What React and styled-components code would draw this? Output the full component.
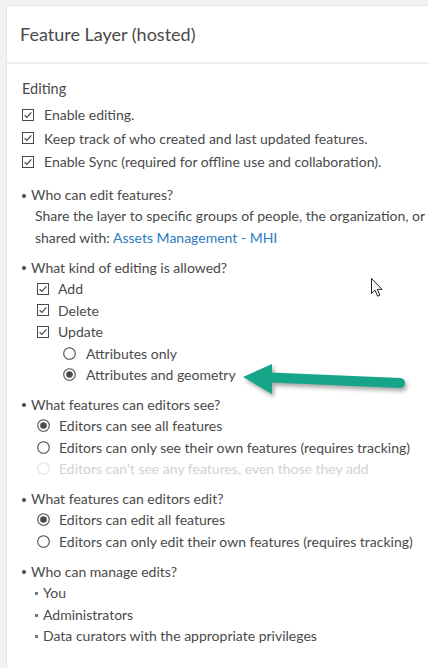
import React from 'react';
import styled, { createGlobalStyle } from 'styled-components';

const GlobalStyle = createGlobalStyle`
  html, body {margin: 0; padding: 0; background: #f2f2f2;}
  body {font-family: Lato, "Open Sans", sans-serif; color: #4a4a4a;}
  ul {list-style: none; margin: 0; padding: 0;}
`;

const Page = styled.div`
  position: relative;
  height: 668px;
  overflow: hidden;
  padding: 5px 0 0 6px;
  box-sizing: border-box;
`;
const Panel = styled.section`
  width: 460px;
  min-height: 100%;
  background: #fff;
  border-left: 1px solid #e6e6e6;
  border-top: 1px solid #e6e6e6;
`;
const Header = styled.header`
  height: 56px;
  display: flex;
  align-items: center;
  padding-left: 13px;
  border-bottom: 2px solid #ececec;
`;
const Title = styled.h2`
  margin: 0;
  font-size: 18px;
  font-weight: 400;
  color: #4a4a4a;
`;
const Body = styled.div`
  padding: 14px 0 30px 15px;
  font-size: 14px;
`;
const GroupTitle = styled.div`
  line-height: 22px;
  font-size: 14.5px;
`;
const OptionList = styled.ul`
  margin-top: ${p => p.$top || 0}px;
  padding-left: ${p => p.$indent || 0}px;
`;
const Option = styled.li`
  display: flex;
  align-items: center;
  gap: ${p => p.$gap || 9}px;
  height: ${p => p.$h || 21.4}px;
  color: ${p => (p.$disabled ? '#d2d2d2' : 'inherit')};
  white-space: nowrap;
`;
const Sections = styled.ul`
  margin-top: 10.5px;
`;
const Section = styled.li`
  & + & {margin-top: 8.6px;}
`;
const Question = styled.div`
  display: flex;
  align-items: center;
  gap: 5px;
  height: 21.4px;
  white-space: nowrap;
  &::before {
    content: '';
    width: 4px;
    height: 4px;
    border-radius: 50%;
    background: #4a4a4a;
    margin-top: 2px;
    flex: none;
  }
`;
const Note = styled.p`
  margin: 0;
  padding-left: 13px;
  line-height: 21.4px;
  white-space: nowrap;
`;
const Link = styled.a`
  color: #2d7cc1;
  text-decoration: none;
`;
const SquareList = styled.ul`
  padding-left: 13px;
`;
const SquareItem = styled.li`
  display: flex;
  align-items: center;
  gap: 5px;
  height: 21.4px;
  &::before {
    content: '';
    width: 3px;
    height: 3px;
    background: #777;
    margin-top: 2px;
    flex: none;
  }
`;
const Overlay = styled.svg`
  position: absolute;
  left: ${p => p.$x}px;
  top: ${p => p.$y}px;
  overflow: visible;
`;

function CheckIcon() {
  return (
    <svg width="12" height="12" viewBox="0 0 12 12">
      <rect x="0.5" y="0.5" width="11" height="11" fill="none" stroke="#4a4a4a" />
      <path d="M2.6 6.2 L4.9 8.4 L9.4 3.4" fill="none" stroke="#4a4a4a" strokeWidth="1.2" />
    </svg>
  );
}

function RadioIcon({ checked, disabled }) {
  const c = disabled ? '#e2e2e2' : '#4a4a4a';
  return (
    <svg width="13" height="13" viewBox="0 0 13 13">
      <circle cx="6.5" cy="6.5" r="5.8" fill="none" stroke={c} strokeWidth="1.1" />
      {checked && <circle cx="6.5" cy="6.5" r="3.3" fill={c} />}
    </svg>
  );
}

export default function App() {
  return (
    <Page>
      <GlobalStyle />
      <Panel>
        <Header><Title>Feature Layer (hosted)</Title></Header>
        <Body>
          <GroupTitle>Editing</GroupTitle>
          <OptionList $top={3}>
            <Option $h={23.5} $gap={10}><CheckIcon />Enable editing.</Option>
            <Option $h={23.5} $gap={10}><CheckIcon />Keep track of who created and last updated features.</Option>
            <Option $h={23.5} $gap={10}><CheckIcon />Enable Sync (required for offline use and collaboration).</Option>
          </OptionList>

          <Sections>
            <Section>
              <Question>Who can edit features?</Question>
              <Note>Share the layer to specific groups of people, the organization, or everyone.</Note>
              <Note>shared with: <Link href="#">Assets Management - MHI</Link></Note>
            </Section>

            <Section>
              <Question>What kind of editing is allowed?</Question>
              <OptionList $indent={15}>
                <Option><CheckIcon />Add</Option>
                <Option><CheckIcon />Delete</Option>
                <Option><CheckIcon />Update</Option>
              </OptionList>
              <OptionList $indent={41}>
                <Option $gap={10}><RadioIcon />Attributes only</Option>
                <Option $gap={10}><RadioIcon checked />Attributes and geometry</Option>
              </OptionList>
            </Section>

            <Section>
              <Question>What features can editors see?</Question>
              <OptionList $indent={15}>
                <Option><RadioIcon checked />Editors can see all features</Option>
                <Option><RadioIcon />Editors can only see their own features (requires tracking)</Option>
                <Option $disabled><RadioIcon disabled />Editors can't see any features, even those they add</Option>
              </OptionList>
            </Section>

            <Section>
              <Question>What features can editors edit?</Question>
              <OptionList $indent={15}>
                <Option><RadioIcon checked />Editors can edit all features</Option>
                <Option><RadioIcon />Editors can only edit their own features (requires tracking)</Option>
              </OptionList>
            </Section>

            <Section>
              <Question>Who can manage edits?</Question>
              <SquareList>
                <SquareItem>You</SquareItem>
                <SquareItem>Administrators</SquareItem>
                <SquareItem>Data curators with the appropriate privileges</SquareItem>
              </SquareList>
            </Section>
          </Sections>
        </Body>
      </Panel>

      {/* annotation arrow */}
      <Overlay $x={230} $y={355} width="190" height="50" viewBox="0 0 190 50"
        style={{ filter: 'drop-shadow(2px 3px 2px rgba(0,0,0,0.35))' }}>
        <path d="M40 22.5 L170 28" stroke="#17a589" strokeWidth="10" strokeLinecap="round" fill="none" />
        <path d="M13 22 L42 9 L42 39 Z" fill="#17a589" />
      </Overlay>

      {/* mouse pointer */}
      <Overlay $x={371} $y={278} width="13" height="19" viewBox="0 0 13 19">
        <path d="M0.5 0.5 L0.5 15.5 L4 12.2 L6.6 18.2 L8.8 17.2 L6.3 11.4 L11 11.4 Z"
          fill="#fff" stroke="#222" strokeWidth="1" strokeLinejoin="round" />
      </Overlay>
    </Page>
  );
}
